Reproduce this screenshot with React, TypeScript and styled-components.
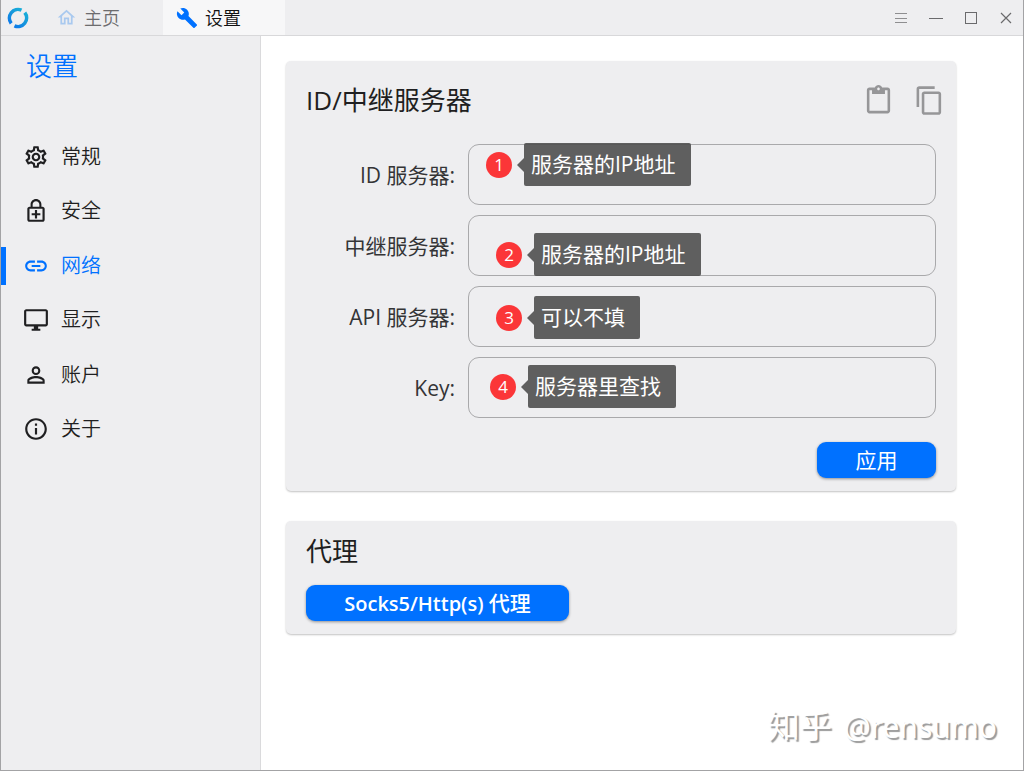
import React from 'react';
import styled, { createGlobalStyle, css } from 'styled-components';
import {
  MdBuild,
  MdContentCopy,
  MdContentPaste,
  MdInfoOutline,
  MdLink,
  MdOutlineDesktopWindows,
  MdOutlineEnhancedEncryption,
  MdOutlineHome,
  MdOutlineSettings,
  MdPersonOutline,
} from 'react-icons/md';

const blue = '#0071ff';
const panel = '#eeeef0';

const GlobalStyle = createGlobalStyle`
  *, *::before, *::after { box-sizing: border-box; }
  body {
    margin: 0;
    background: #fff;
    color: #1f1f21;
    font-family: 'Open Sans', 'Noto Sans CJK SC', sans-serif;
    font-weight: 350;
  }
  button, input { font: inherit; color: inherit; }
  h1, h2, p { margin: 0; font-weight: inherit; }
`;

const Window = styled.div`
  position: relative;
  display: flex;
  flex-direction: column;
  min-height: 100vh;
  border: 1px solid #a3a3a5;
  border-top: 0;
`;

const TitleBar = styled.header`
  display: flex;
  height: 36px;
  background: ${panel};
  border-bottom: 1px solid #d8d8da;
`;

const LogoBox = styled.div`
  display: flex;
  align-items: center;
  width: 38px;
  padding-left: 6px;
`;

const Tab = styled.button<{ $active?: boolean }>`
  display: flex;
  align-items: center;
  gap: 7px;
  width: ${p => (p.$active ? 122 : 124)}px;
  padding: 0 ${p => (p.$active ? 13 : 17)}px;
  border: 0;
  background: ${p => (p.$active ? '#f7f7f8' : 'transparent')};
  color: ${p => (p.$active ? '#111' : '#6c6c6e')};
  font-size: 18px;
  line-height: 24px;
  white-space: nowrap;
`;

const WindowControls = styled.div`
  display: flex;
  margin-left: auto;
`;

const ControlButton = styled.button`
  display: flex;
  align-items: center;
  justify-content: center;
  width: 35px;
  padding: 0;
  border: 0;
  background: transparent;
  color: #6a6a6c;
`;

const Body = styled.div`
  display: flex;
  flex: 1;
`;

const Sidebar = styled.aside`
  flex: none;
  width: 260px;
  background: ${panel};
  border-right: 1px solid #dadadc;
`;

const SidebarTitle = styled.h1`
  padding: 12px 25px 0;
  color: ${blue};
  font-size: 26px;
  line-height: 36px;
`;

const Nav = styled.nav`
  display: flex;
  flex-direction: column;
  justify-content: space-between;
  height: 310px;
  margin-top: 54px;
`;

const NavItem = styled.a<{ $active?: boolean }>`
  display: flex;
  align-items: center;
  gap: 12px;
  height: 38px;
  padding-left: 17px;
  border-left: 5px solid transparent;
  color: inherit;
  font-size: 20px;
  line-height: 28px;
  text-decoration: none;
  ${p =>
    p.$active &&
    css`
      border-left-color: ${blue};
      color: ${blue};
    `}
`;

const Content = styled.main`
  display: flex;
  flex: 1;
  flex-direction: column;
  gap: 30px;
  min-width: 0;
  padding: 25px;
`;

const Card = styled.section`
  width: 100%;
  max-width: 670px;
  padding: 20px;
  background: ${panel};
  border-radius: 5px;
  box-shadow: 0 1px 2px rgba(0, 0, 0, 0.24);
`;

const ServerCard = styled(Card)`
  padding-bottom: 13px;
`;

const ProxyCard = styled(Card)`
  padding: 12px 20px 13px;
`;

const CardHeader = styled.div`
  display: flex;
  align-items: center;
  justify-content: space-between;
  height: 38px;
  margin-bottom: 25px;
`;

const CardTitle = styled.h2`
  font-size: 26px;
  font-weight: 400;
  line-height: 36px;
`;

const CardActions = styled.div`
  display: flex;
  gap: 20px;
  margin-right: -9px;
`;

const IconButton = styled.button`
  display: flex;
  padding: 0;
  border: 0;
  background: transparent;
  color: #969698;
`;

const Fields = styled.div`
  display: grid;
  gap: 10px;
`;

const FieldRow = styled.div`
  display: grid;
  grid-template-columns: 149px 1fr;
  gap: 13px;
  align-items: center;
`;

const FieldLabel = styled.label`
  color: #343436;
  font-size: 21px;
  font-weight: 400;
  line-height: 28px;
  text-align: right;
  white-space: nowrap;
`;

const FieldBox = styled.div`
  position: relative;
`;

const TextInput = styled.input`
  display: block;
  width: 100%;
  height: 61px;
  padding: 0 16px;
  border: 1px solid #a9a9ab;
  border-radius: 11px;
  background: transparent;
  font-size: 20px;
`;

const Callout = styled.div<{ $x: number; $y: number }>`
  position: absolute;
  top: ${p => p.$y}px;
  left: ${p => p.$x}px;
  display: flex;
  align-items: center;
  color: #fff;
  pointer-events: none;
`;

const Badge = styled.span`
  width: 26px;
  height: 26px;
  border-radius: 50%;
  background: #fb3638;
  font-size: 17px;
  font-weight: 400;
  line-height: 26px;
  text-align: center;
`;

const Arrow = styled.span`
  margin-left: 5px;
  border: 7px solid transparent;
  border-left-width: 0;
  border-right-color: rgba(79, 79, 79, 0.9);
`;

const CalloutText = styled.span`
  height: 43px;
  padding: 0 15px 0 7px;
  border-radius: 2px;
  background: rgba(79, 79, 79, 0.9);
  font-size: 21px;
  font-weight: 400;
  line-height: 43px;
  white-space: nowrap;
`;

const CardFooter = styled.div`
  display: flex;
  justify-content: flex-end;
  margin-top: 24px;
`;

const PrimaryButton = styled.button<{ $wide?: boolean }>`
  width: ${p => (p.$wide ? 263 : 119)}px;
  height: 36px;
  padding: 0;
  border: 0;
  border-radius: 9px;
  background: ${blue};
  box-shadow: 0 1px 3px rgba(0, 0, 0, 0.4);
  color: #fff;
  font-size: ${p => (p.$wide ? 20 : 21)}px;
  font-weight: ${p => (p.$wide ? 600 : 400)};
  line-height: 36px;
`;

const ButtonCjk = styled.span`
  font-size: 21px;
  font-weight: 500;
`;

const ProxyTitle = styled(CardTitle)`
  margin-bottom: 16px;
`;

const Watermark = styled.p`
  position: absolute;
  right: 26px;
  bottom: 23px;
  color: #fff;
  font-family: 'Noto Sans', 'Noto Sans CJK SC', sans-serif;
  font-size: 30px;
  font-weight: 400;
  line-height: 40px;
  text-shadow: 2px 2px 1px #9a9a9a;
`;

const WatermarkSite = styled.span`
  margin-right: 4px;
  font-size: 32px;
`;

const Logo = () => (
  <svg width="22" height="22" viewBox="0 0 22 22" fill="none" aria-label="RustDesk">
    <defs>
      <linearGradient id="logoFill" x1="18" y1="2" x2="4" y2="20" gradientUnits="userSpaceOnUse">
        <stop offset="0" stopColor="#18b4d8" />
        <stop offset="0.5" stopColor="#1595dc" />
        <stop offset="1" stopColor="#0a74ee" />
      </linearGradient>
    </defs>
    <g stroke="url(#logoFill)" strokeWidth="3.600">
      <path d="M14.500 3.200A8.600 8.600 0 0 0 4.200 16.300" />
      <path d="M17.800 5.700A8.600 8.600 0 0 1 7.500 18.800" />
    </g>
  </svg>
);

const navItems = [
  { label: '常规', icon: MdOutlineSettings },
  { label: '安全', icon: MdOutlineEnhancedEncryption },
  { label: '网络', icon: MdLink, active: true },
  { label: '显示', icon: MdOutlineDesktopWindows },
  { label: '账户', icon: MdPersonOutline },
  { label: '关于', icon: MdInfoOutline },
];

const fields = [
  { id: 'id-server', label: 'ID 服务器:', note: '服务器的IP地址', x: 18, y: -1 },
  { id: 'relay-server', label: '中继服务器:', note: '服务器的IP地址', x: 28, y: 18 },
  { id: 'api-server', label: 'API 服务器:', note: '可以不填', x: 28, y: 10 },
  { id: 'key', label: 'Key:', note: '服务器里查找', x: 22, y: 8 },
];

export default function App() {
  return (
    <Window>
      <GlobalStyle />
      <TitleBar>
        <LogoBox>
          <Logo />
        </LogoBox>
        <Tab>
          <MdOutlineHome size={21} color="#a9c9ef" />
          主页
        </Tab>
        <Tab $active>
          <MdBuild size={22} color={blue} />
          设置
        </Tab>
        <WindowControls>
          <ControlButton aria-label="菜单">
            <svg width="14" height="12" stroke="#8e8e90" shapeRendering="crispEdges">
              <path d="M1 1.500h12M1 6.500h12M1 10.500h12" />
            </svg>
          </ControlButton>
          <ControlButton aria-label="最小化">
            <svg width="14" height="12" stroke="currentColor" shapeRendering="crispEdges">
              <path d="M0 6.500h14" />
            </svg>
          </ControlButton>
          <ControlButton aria-label="最大化">
            <svg width="14" height="14" fill="none" stroke="currentColor" shapeRendering="crispEdges">
              <path d="M1.500 1.500h11v11h-11z" />
            </svg>
          </ControlButton>
          <ControlButton aria-label="关闭">
            <svg width="12" height="12" stroke="currentColor" strokeWidth="1.200">
              <path d="M1 1l10 10M11 1L1 11" />
            </svg>
          </ControlButton>
        </WindowControls>
      </TitleBar>
      <Body>
        <Sidebar>
          <SidebarTitle>设置</SidebarTitle>
          <Nav>
            {navItems.map(({ label, icon: Icon, active }) => (
              <NavItem key={label} href="#" $active={active}>
                <Icon size={26} />
                {label}
              </NavItem>
            ))}
          </Nav>
        </Sidebar>
        <Content>
          <ServerCard>
            <CardHeader>
              <CardTitle>ID/中继服务器</CardTitle>
              <CardActions>
                <IconButton aria-label="粘贴">
                  <MdContentPaste size={31} />
                </IconButton>
                <IconButton aria-label="复制">
                  <MdContentCopy size={31} />
                </IconButton>
              </CardActions>
            </CardHeader>
            <Fields>
              {fields.map((field, i) => (
                <FieldRow key={field.id}>
                  <FieldLabel htmlFor={field.id}>{field.label}</FieldLabel>
                  <FieldBox>
                    <TextInput id={field.id} type="text" />
                    <Callout $x={field.x} $y={field.y}>
                      <Badge>{i + 1}</Badge>
                      <Arrow />
                      <CalloutText>{field.note}</CalloutText>
                    </Callout>
                  </FieldBox>
                </FieldRow>
              ))}
            </Fields>
            <CardFooter>
              <PrimaryButton>应用</PrimaryButton>
            </CardFooter>
          </ServerCard>
          <ProxyCard>
            <ProxyTitle>代理</ProxyTitle>
            <PrimaryButton $wide>
              Socks5/Http(s) <ButtonCjk>代理</ButtonCjk>
            </PrimaryButton>
          </ProxyCard>
        </Content>
      </Body>
      <Watermark>
        <WatermarkSite>知乎</WatermarkSite>
        {' @rensumo'}
      </Watermark>
    </Window>
  );
}
